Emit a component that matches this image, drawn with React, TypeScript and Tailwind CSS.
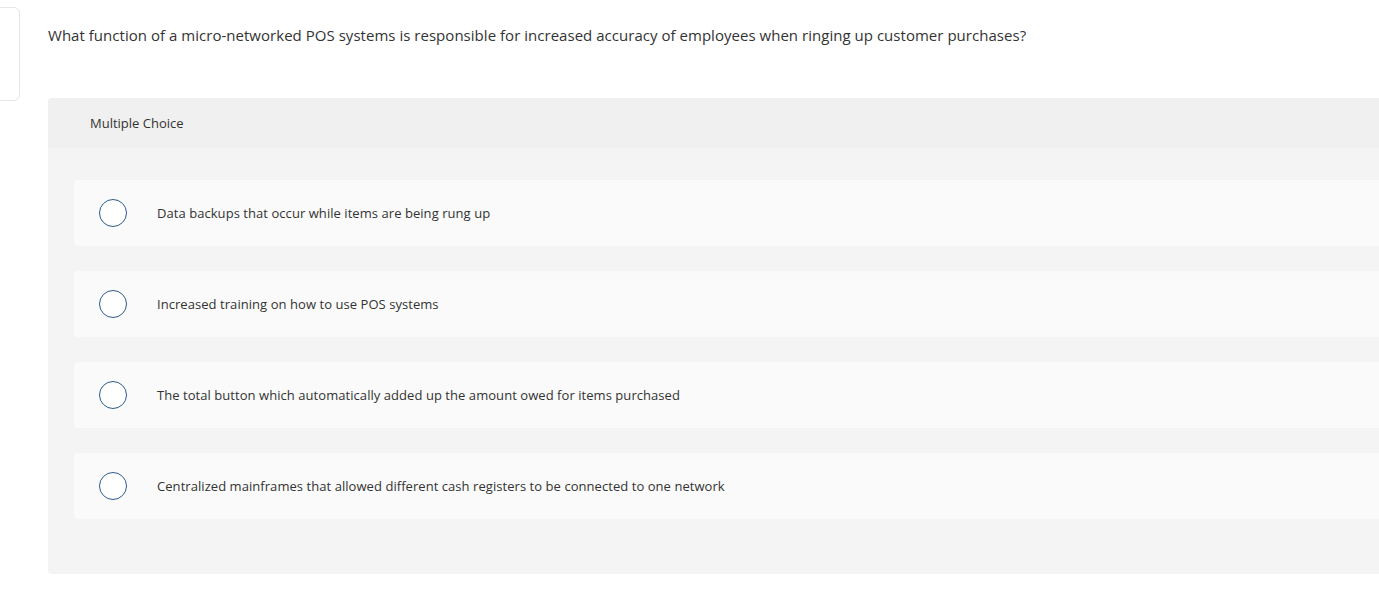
import React from "react";

const options = [
  "Data backups that occur while items are being rung up",
  "Increased training on how to use POS systems",
  "The total button which automatically added up the amount owed for items purchased",
  "Centralized mainframes that allowed different cash registers to be connected to one network",
];

export default function App() {
  return (
    <div
      className="relative w-[1379px] h-[592px] overflow-hidden bg-white text-[#333]"
      style={{ fontFamily: '"Open Sans", "Liberation Sans", sans-serif' }}
    >
      <div className="absolute left-[-10px] top-[7px] w-[30px] h-[94px] rounded-[6px] border border-[#e6e6e6] bg-white" />
      <div className="pl-[48px] pt-[24px]">
        <p className="text-[15px] leading-[22px] text-[#333] tracking-[0.03px]">
          What function of a micro-networked POS systems is responsible for increased accuracy of employees when ringing up customer purchases?
        </p>
        <div className="mt-[52px] w-[1340px] rounded-l-[4px] bg-[#f4f4f4]">
          <div className="h-[50px] flex items-center pl-[42px] pt-[2px] bg-[#f0f0f0] rounded-tl-[4px]">
            <span className="text-[13px] text-[#333]">Multiple Choice</span>
          </div>
          <div className="pt-[32px] pb-[55px] pl-[26px] flex flex-col gap-[25px]">
            {options.map((o) => (
              <div key={o} className="h-[66px] flex items-center rounded-[4px] bg-[#fafafa] pl-[25px]">
                <div className="w-[28px] h-[28px] rounded-full border-[1.5px] border-[#2b5b8c] bg-white shrink-0" />
                <span className="ml-[30px] pt-[2px] text-[13px] text-[#333] tracking-[0.055px]">{o}</span>
              </div>
            ))}
          </div>
        </div>
      </div>
    </div>
  );
}
